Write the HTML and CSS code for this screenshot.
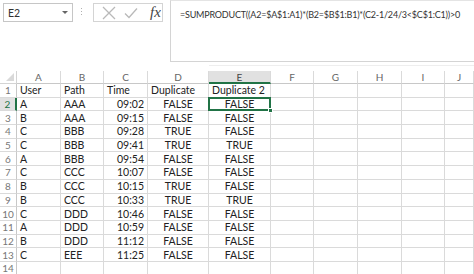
FILE: index.html
```html
<!DOCTYPE html>
<html>
<head>
<meta charset="utf-8">
<link rel="stylesheet" href="styles.css">
</head>
<body>
<div class="top">
  <div class="namebox"><span class="ref">E2</span><span class="arrow"></span></div>
  <div class="dots"><i></i><i></i><i></i></div>
  <div class="buttons">
    <svg class="x" width="14" height="14" viewBox="0 0 14 14"><path d="M1 1L13 13M13 1L1 13" stroke="#b9b9b9" stroke-width="1.3" fill="none"/></svg>
    <svg class="ok" width="14" height="12" viewBox="0 0 14 12"><path d="M1 6.5L5 10.5L13 1.5" stroke="#b9b9b9" stroke-width="1.3" fill="none"/></svg>
    <span class="fx">fx</span>
  </div>
  <div class="formula">=SUMPRODUCT((A2=$A$1:A1)*(B2=$B$1:B1)*(C2-1/24/3&lt;$C$1:C1))&gt;0</div>
</div>
<div class="gap"><div class="gapline"></div></div>
<div class="grid">
  <div class="corner"><svg width="8" height="8" viewBox="0 0 8 8"><path d="M8 0V8H0Z" fill="#d9d9d9"/></svg></div>
  <div class="ch">A</div><div class="ch">B</div><div class="ch">C</div><div class="ch">D</div><div class="ch sel">E</div><div class="ch">F</div><div class="ch">G</div><div class="ch">H</div><div class="ch">I</div><div class="ch">J</div>

  <div class="rh">1</div><div class="c">User</div><div class="c">Path</div><div class="c">Time</div><div class="c">Duplicate</div><div class="c">Duplicate 2</div><div class="c"></div><div class="c"></div><div class="c"></div><div class="c"></div><div class="c"></div>

  <div class="rh selr">2</div><div class="c">A</div><div class="c">AAA</div><div class="c r">09:02</div><div class="c m">FALSE</div><div class="c m active">FALSE</div><div class="c"></div><div class="c"></div><div class="c"></div><div class="c"></div><div class="c"></div>

  <div class="rh">3</div><div class="c">B</div><div class="c">AAA</div><div class="c r">09:15</div><div class="c m">FALSE</div><div class="c m">FALSE</div><div class="c"></div><div class="c"></div><div class="c"></div><div class="c"></div><div class="c"></div>

  <div class="rh">4</div><div class="c">C</div><div class="c">BBB</div><div class="c r">09:28</div><div class="c m">TRUE</div><div class="c m">FALSE</div><div class="c"></div><div class="c"></div><div class="c"></div><div class="c"></div><div class="c"></div>

  <div class="rh">5</div><div class="c">C</div><div class="c">BBB</div><div class="c r">09:41</div><div class="c m">TRUE</div><div class="c m">TRUE</div><div class="c"></div><div class="c"></div><div class="c"></div><div class="c"></div><div class="c"></div>

  <div class="rh">6</div><div class="c">A</div><div class="c">BBB</div><div class="c r">09:54</div><div class="c m">FALSE</div><div class="c m">FALSE</div><div class="c"></div><div class="c"></div><div class="c"></div><div class="c"></div><div class="c"></div>

  <div class="rh">7</div><div class="c">C</div><div class="c">CCC</div><div class="c r">10:07</div><div class="c m">FALSE</div><div class="c m">FALSE</div><div class="c"></div><div class="c"></div><div class="c"></div><div class="c"></div><div class="c"></div>

  <div class="rh">8</div><div class="c">B</div><div class="c">CCC</div><div class="c r">10:15</div><div class="c m">TRUE</div><div class="c m">FALSE</div><div class="c"></div><div class="c"></div><div class="c"></div><div class="c"></div><div class="c"></div>

  <div class="rh">9</div><div class="c">B</div><div class="c">CCC</div><div class="c r">10:33</div><div class="c m">TRUE</div><div class="c m">TRUE</div><div class="c"></div><div class="c"></div><div class="c"></div><div class="c"></div><div class="c"></div>

  <div class="rh">10</div><div class="c">C</div><div class="c">DDD</div><div class="c r">10:46</div><div class="c m">FALSE</div><div class="c m">FALSE</div><div class="c"></div><div class="c"></div><div class="c"></div><div class="c"></div><div class="c"></div>

  <div class="rh">11</div><div class="c">A</div><div class="c">DDD</div><div class="c r">10:59</div><div class="c m">FALSE</div><div class="c m">FALSE</div><div class="c"></div><div class="c"></div><div class="c"></div><div class="c"></div><div class="c"></div>

  <div class="rh">12</div><div class="c">B</div><div class="c">DDD</div><div class="c r">11:12</div><div class="c m">FALSE</div><div class="c m">FALSE</div><div class="c"></div><div class="c"></div><div class="c"></div><div class="c"></div><div class="c"></div>

  <div class="rh">13</div><div class="c">C</div><div class="c">EEE</div><div class="c r">11:25</div><div class="c m">FALSE</div><div class="c m">FALSE</div><div class="c"></div><div class="c"></div><div class="c"></div><div class="c"></div><div class="c"></div>

  <div class="rh">14</div><div class="c"></div><div class="c"></div><div class="c"></div><div class="c"></div><div class="c"></div><div class="c"></div><div class="c"></div><div class="c"></div><div class="c"></div><div class="c"></div>
</div>
</body>
</html>
```

FILE: styles.css
```css
html, body {
  margin: 0;
  padding: 0;
  background: #fff;
  width: 474px;
  height: 274px;
  overflow: hidden;
  font-family: "Lato", "Liberation Sans", sans-serif;
  color: #222;
}

.top {
  display: flex;
  align-items: flex-start;
  height: 62px;
}

.namebox {
  margin: 3px 0 0 3px;
  width: 70px;
  height: 19px;
  box-sizing: border-box;
  border: 1px solid #c6c6c6;
  display: flex;
  align-items: center;
  justify-content: space-between;
  padding: 0 4px 0 4px;
  font-size: 10.5px;
  color: #333;
}

.arrow {
  width: 0;
  height: 0;
  border-left: 3px solid transparent;
  border-right: 3px solid transparent;
  border-top: 3px solid #666;
}

.dots {
  margin: 8px 0 0 8px;
  display: flex;
  flex-direction: column;
  gap: 2px;
  width: 2px;
}
.dots i {
  display: block;
  width: 1px;
  height: 1px;
  background: #b0b0b0;
}

.buttons {
  margin: 3px 0 0 10px;
  width: 70px;
  height: 19px;
  box-sizing: border-box;
  border: 1px solid #d4d4d4;
  display: flex;
  align-items: center;
  padding-left: 8px;
}
.buttons .x { margin-right: 8px; }
.buttons .ok { margin-right: 12px; }
.fx {
  font-family: "Liberation Serif", serif;
  font-style: italic;
  font-size: 15px;
  color: #444;
  line-height: 1;
}

.formula {
  margin-left: 7px;
  flex: 1;
  height: 62px;
  box-sizing: border-box;
  border-left: 1px solid #d4d4d4;
  border-top: 1px solid #e4e4e4;
  border-bottom: 1px solid #d4d4d4;
  padding: 8px 0 0 9px;
  font-size: 9px;
  letter-spacing: -0.2px;
  color: #333;
  white-space: nowrap;
  overflow: hidden;
}

.gap {
  height: 6px;
}
.gapline {
  margin: 3px 0 0 209px;
  height: 1px;
  background: #eeeeee;
}

.grid {
  display: grid;
  grid-template-columns: 17px 44px 43px 44px 61px 62px 43px 44px 44px 43px 1fr;
  grid-template-rows: 13px repeat(14, 13.7px);
  font-size: 10.5px;
}

.corner {
  border-right: 1px solid #d4d4d4;
  border-bottom: 1px solid #d4d4d4;
  display: flex;
  align-items: flex-end;
  justify-content: flex-end;
  padding: 0 2px 2px 0;
  box-sizing: border-box;
}

.ch {
  border-right: 1px solid #dadada;
  border-bottom: 1px solid #c8c8c8;
  box-sizing: border-box;
  display: flex;
  align-items: center;
  justify-content: center;
  color: #666;
  font-size: 10px;
}
.ch.sel {
  background: #e1e1e1;
  border-bottom: 2px solid #217346;
  color: #444;
}

.rh {
  border-right: 1px solid #c8c8c8;
  border-bottom: 1px solid #dadada;
  box-sizing: border-box;
  display: flex;
  align-items: center;
  justify-content: center;
  color: #777;
  font-size: 10px;
}
.rh.selr {
  background: #e1e1e1;
  color: #217346;
  border-right: 2px solid #217346;
}

.c {
  border-right: 1px solid #dadada;
  border-bottom: 1px solid #dadada;
  box-sizing: border-box;
  display: flex;
  align-items: center;
  padding: 0 3px;
  white-space: nowrap;
  overflow: visible;
}
.c.r { justify-content: flex-end; }
.c.m { justify-content: center; }

.c.active {
  position: relative;
}
.c.active::after {
  content: "";
  position: absolute;
  left: -1px;
  top: -1px;
  right: -1px;
  bottom: -1px;
  border: 2px solid #217346;
}
.c.active::before {
  content: "";
  position: absolute;
  right: -3px;
  bottom: -3px;
  width: 5px;
  height: 5px;
  background: #217346;
  border: 1px solid #fff;
  box-sizing: border-box;
  z-index: 2;
}
```
